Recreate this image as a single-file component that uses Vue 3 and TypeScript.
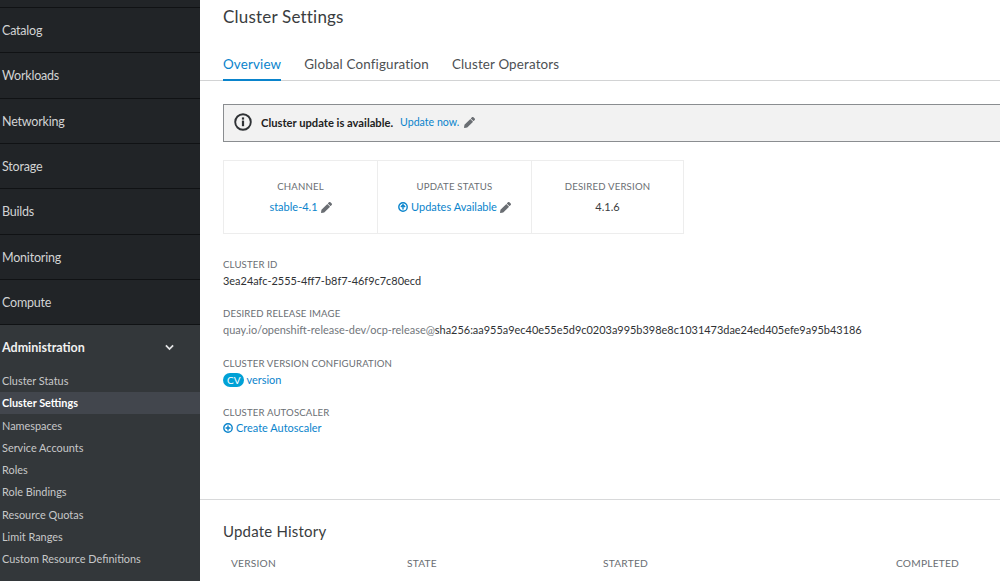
<script setup lang="ts">
const navTop: string[] = ['Catalog', 'Workloads', 'Networking', 'Storage', 'Builds', 'Monitoring', 'Compute']
const adminItems: string[] = ['Cluster Status', 'Cluster Settings', 'Namespaces', 'Service Accounts', 'Roles', 'Role Bindings', 'Resource Quotas', 'Limit Ranges', 'Custom Resource Definitions']
const pencil = 'M497.9 142.1l-46.1 46.1c-4.7 4.7-12.3 4.7-17 0l-111-111c-4.7-4.7-4.7-12.3 0-17l46.1-46.1c18.7-18.7 49.1-18.7 67.9 0l60.1 60.1c18.8 18.7 18.8 49.1 0 67.9zM284.2 99.8L21.6 362.4.4 483.9c-2.9 16.4 11.4 30.6 27.8 27.8l121.5-21.3 262.6-262.6c4.7-4.7 4.7-12.3 0-17l-111-111c-4.8-4.7-12.4-4.7-17.1 0z'
</script>

<template>
  <div class="page">
    <aside class="sidebar">
      <div class="stub"></div>
      <div v-for="item in navTop" :key="item" class="nav-row">{{ item }}</div>
      <div class="admin">
        <div class="admin-head">
          <span>Administration</span>
          <svg class="chev" viewBox="0 0 10 7" width="9" height="7"><path d="M1 1.2 5 5.2 9 1.2" fill="none" stroke="#e4e5e6" stroke-width="2" /></svg>
        </div>
        <div v-for="item in adminItems" :key="item" class="sub" :class="{ active: item === 'Cluster Settings' }">{{ item }}</div>
      </div>
    </aside>
    <main class="main">
      <h1 class="title">Cluster Settings</h1>
      <nav class="tabs">
        <span class="tab current">Overview</span>
        <span class="tab">Global Configuration</span>
        <span class="tab">Cluster Operators</span>
      </nav>
      <section class="body">
        <div class="alert">
          <svg class="info" viewBox="0 0 18 18" width="18" height="18">
            <circle cx="9" cy="9" r="7.8" fill="none" stroke="#2f3235" stroke-width="1.9" />
            <rect x="7.9" y="7.6" width="2.2" height="5.6" fill="#2f3235" />
            <rect x="7.9" y="4.4" width="2.2" height="2.2" fill="#2f3235" />
          </svg>
          <strong>Cluster update is available.</strong>
          <a class="link now">Update now.</a>
          <svg class="pen" viewBox="0 0 512 512" width="11" height="11"><path :d="pencil" /></svg>
        </div>
        <div class="cards">
          <div class="card">
            <div class="label">CHANNEL</div>
            <div class="value">
              <a class="link">stable-4.1</a>
              <svg class="pen" viewBox="0 0 512 512" width="11" height="11"><path :d="pencil" /></svg>
            </div>
          </div>
          <div class="card">
            <div class="label">UPDATE STATUS</div>
            <div class="value">
              <svg class="round" viewBox="0 0 10 10" width="10" height="10">
                <circle cx="5" cy="5" r="4.2" fill="none" stroke="#0a84cc" stroke-width="1.4" />
                <path d="M5 7.6V3M2.9 5 5 2.8 7.1 5" fill="none" stroke="#0a84cc" stroke-width="1.4" />
              </svg>
              <a class="link">Updates Available</a>
              <svg class="pen" viewBox="0 0 512 512" width="11" height="11"><path :d="pencil" /></svg>
            </div>
          </div>
          <div class="card">
            <div class="label">DESIRED VERSION</div>
            <div class="value plain">4.1.6</div>
          </div>
        </div>
        <dl class="details">
          <dt>CLUSTER ID</dt>
          <dd>3ea24afc-2555-4ff7-b8f7-46f9c7c80ecd</dd>
          <dt>DESIRED RELEASE IMAGE</dt>
          <dd class="release"><span class="muted">quay.io/openshift-release-dev/ocp-release@</span>sha256:aa955a9ec40e55e5d9c0203a995b398e8c1031473dae24ed405efe9a95b43186</dd>
          <dt>CLUSTER VERSION CONFIGURATION</dt>
          <dd class="resource"><span class="badge">CV</span><a class="link">version</a></dd>
          <dt>CLUSTER AUTOSCALER</dt>
          <dd class="resource autoscaler">
            <svg class="round" viewBox="0 0 10 10" width="10" height="10">
              <circle cx="5" cy="5" r="4.2" fill="none" stroke="#0a84cc" stroke-width="1.4" />
              <path d="M5 2.6V7.4M2.6 5H7.4" fill="none" stroke="#0a84cc" stroke-width="1.4" />
            </svg>
            <a class="link">Create Autoscaler</a>
          </dd>
        </dl>
      </section>
      <section class="history">
        <h2>Update History</h2>
        <div class="thead">
          <span class="c1">VERSION</span>
          <span class="c2">STATE</span>
          <span class="c3">STARTED</span>
          <span class="c4">COMPLETED</span>
        </div>
      </section>
    </main>
  </div>
</template>

<style scoped>
.page {
  display: flex;
  width: 1000px;
  height: 581px;
  overflow: hidden;
  background: #fff;
  font-family: "Lato", "Liberation Sans", sans-serif;
  color: #2f3235;
}
.sidebar {
  flex: 0 0 200px;
  background: #212427;
  display: flex;
  flex-direction: column;
}
.stub {
  height: 8px;
  box-sizing: border-box;
  border-bottom: 1px solid #101214;
}
.nav-row {
  height: 45.33px;
  box-sizing: border-box;
  padding: 1px 0 0 2px;
  display: flex;
  align-items: center;
  border-bottom: 1px solid #101214;
  color: #d2d3d4;
  font-size: 12.5px;
  letter-spacing: -0.2px;
}
.admin {
  flex: 1;
  background: #33373a;
}
.admin-head {
  height: 44px;
  padding-left: 2px;
  display: flex;
  align-items: center;
  color: #f0f0f0;
  font-size: 12.5px;
  font-weight: 700;
}
.chev {
  margin-left: 80px;
}
.sub {
  height: 22.3px;
  padding-left: 2px;
  display: flex;
  align-items: center;
  color: #c7c8c9;
  font-size: 10.9px;
}
.sub.active {
  background: #42464d;
  color: #fff;
  font-weight: 700;
}
.main {
  flex: 1;
  min-width: 0;
}
.title {
  margin: 0;
  padding: 7px 0 0 23px;
  height: 34px;
  box-sizing: border-box;
  font-size: 17px;
  font-weight: 400;
  line-height: 20px;
  color: #3a3d40;
  letter-spacing: 0.2px;
}
.tabs {
  display: flex;
  gap: 23px;
  height: 47px;
  box-sizing: border-box;
  padding: 13px 0 0 23px;
  border-bottom: 1px solid #d2d3d4;
}
.tab {
  height: 34px;
  box-sizing: border-box;
  padding-top: 9px;
  line-height: 17px;
  font-size: 13.4px;
  color: #4d5053;
  letter-spacing: 0.15px;
}
.tab.current {
  color: #0a84cc;
  border-bottom: 2px solid #0a84cc;
}
.body {
  padding: 23px 0 0 23px;
  height: 419px;
  box-sizing: border-box;
  border-bottom: 1px solid #d8d9da;
}
.alert {
  width: 800px;
  height: 38px;
  box-sizing: border-box;
  display: flex;
  align-items: center;
  padding: 0 0 2px 10px;
  background: #f2f2f2;
  border: 1px solid #8a8d90;
  font-size: 10.6px;
}
.alert strong {
  margin-left: 9px;
  color: #222;
  font-size: 11.2px;
}
.now {
  margin-left: 7px;
}
.alert .pen {
  margin-left: 5px;
}
.link {
  color: #0a84cc;
}
.pen {
  fill: #6a6e73;
  flex: none;
}
.round {
  flex: none;
}
.cards {
  display: flex;
  width: 461px;
  height: 74px;
  box-sizing: border-box;
  margin-top: 18px;
  border: 1px solid #ededed;
}
.card {
  flex: 0 0 153px;
  text-align: center;
  padding-top: 19px;
  box-sizing: border-box;
  font-size: 11px;
}
.card + .card {
  border-left: 1px solid #ededed;
  flex-basis: 154px;
}
.card:last-child {
  flex: 1;
}
.label {
  color: #6a6e73;
  font-size: 9.6px;
  line-height: 13px;
  letter-spacing: 0.2px;
}
.value {
  margin-top: 7px;
  display: flex;
  justify-content: center;
  align-items: center;
  gap: 3px;
  line-height: 14px;
}
.plain {
  color: #3a3d40;
}
.details {
  margin: 0;
  padding-top: 24px;
}
.details dt {
  height: 13px;
  line-height: 13px;
  font-size: 9.6px;
  color: #6a6e73;
  letter-spacing: 0.15px;
}
.details dd {
  margin: 3px 0 19px;
  height: 14px;
  line-height: 14px;
  font-size: 10.95px;
  color: #2f3235;
  white-space: nowrap;
}
.details dd.release {
  margin-bottom: 20px;
}
.details dd.autoscaler {
  margin-top: 2px;
}
.muted {
  color: #72767b;
}
.resource {
  display: flex;
  align-items: center;
  gap: 3px;
}
.badge {
  background: #00a1d6;
  color: #fff;
  font-size: 10px;
  line-height: 14px;
  padding: 0 4px;
  border-radius: 7px;
  margin-right: -1px;
}
.history {
  padding-left: 23px;
}
.history h2 {
  margin: 0;
  padding-top: 21px;
  height: 51px;
  box-sizing: border-box;
  font-size: 15px;
  line-height: 20px;
  font-weight: 400;
  color: #3a3d40;
  letter-spacing: 0.2px;
}
.thead {
  display: flex;
  font-size: 10.2px;
  color: #6a6e73;
  letter-spacing: 0.2px;
  line-height: 13px;
  padding-left: 8px;
  padding-top: 6px;
}
.c1 { flex: 0 0 176px; }
.c2 { flex: 0 0 196px; }
.c3 { flex: 0 0 293px; }
.c4 { flex: none; }
</style>
